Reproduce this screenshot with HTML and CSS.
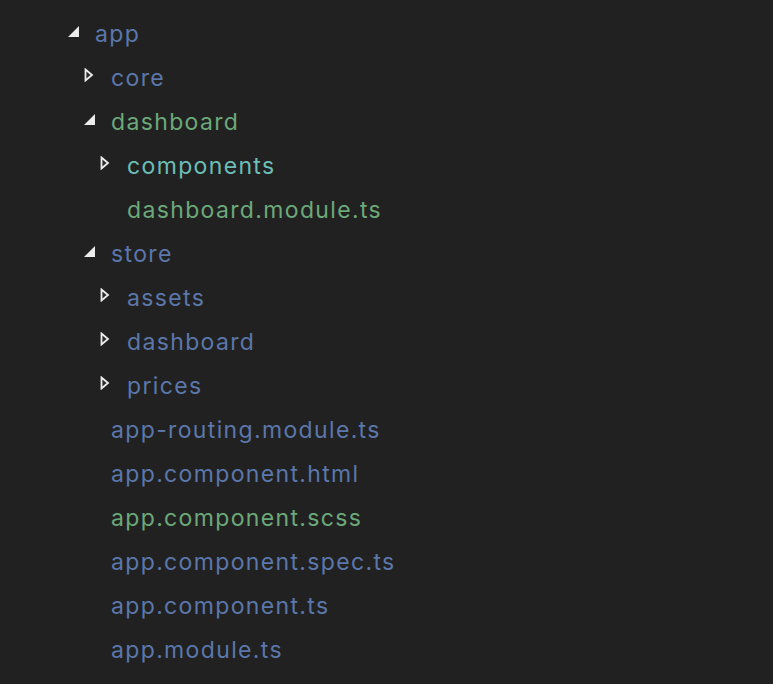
FILE: index.html
```html
<!DOCTYPE html>
<html>
<head>
<meta charset="utf-8">
<link rel="stylesheet" href="styles.css">
</head>
<body>
<ul class="tree">
  <li class="row lvl0"><span class="twistie"><svg class="open" width="11" height="11" viewBox="0 0 11 11"><polygon points="0,11 11,11 11,0" fill="#ececec"/></svg></span><span class="label blue">app</span></li>
  <li class="row lvl1"><span class="twistie"><svg class="closed" width="10" height="14" viewBox="0 0 10 14"><polygon points="1.5,1.5 8,7 1.5,12.5" fill="#2a2a2a" stroke="#ececec" stroke-width="1.8" stroke-linejoin="miter"/></svg></span><span class="label blue">core</span></li>
  <li class="row lvl1"><span class="twistie"><svg class="open" width="11" height="11" viewBox="0 0 11 11"><polygon points="0,11 11,11 11,0" fill="#ececec"/></svg></span><span class="label green">dashboard</span></li>
  <li class="row lvl2"><span class="twistie"><svg class="closed" width="10" height="14" viewBox="0 0 10 14"><polygon points="1.5,1.5 8,7 1.5,12.5" fill="#2a2a2a" stroke="#ececec" stroke-width="1.8" stroke-linejoin="miter"/></svg></span><span class="label teal">components</span></li>
  <li class="row lvl2"><span class="twistie"></span><span class="label green">dashboard.module.ts</span></li>
  <li class="row lvl1"><span class="twistie"><svg class="open" width="11" height="11" viewBox="0 0 11 11"><polygon points="0,11 11,11 11,0" fill="#ececec"/></svg></span><span class="label blue">store</span></li>
  <li class="row lvl2"><span class="twistie"><svg class="closed" width="10" height="14" viewBox="0 0 10 14"><polygon points="1.5,1.5 8,7 1.5,12.5" fill="#2a2a2a" stroke="#ececec" stroke-width="1.8" stroke-linejoin="miter"/></svg></span><span class="label blue">assets</span></li>
  <li class="row lvl2"><span class="twistie"><svg class="closed" width="10" height="14" viewBox="0 0 10 14"><polygon points="1.5,1.5 8,7 1.5,12.5" fill="#2a2a2a" stroke="#ececec" stroke-width="1.8" stroke-linejoin="miter"/></svg></span><span class="label blue">dashboard</span></li>
  <li class="row lvl2"><span class="twistie"><svg class="closed" width="10" height="14" viewBox="0 0 10 14"><polygon points="1.5,1.5 8,7 1.5,12.5" fill="#2a2a2a" stroke="#ececec" stroke-width="1.8" stroke-linejoin="miter"/></svg></span><span class="label blue">prices</span></li>
  <li class="row lvl1"><span class="twistie"></span><span class="label blue">app-routing.module.ts</span></li>
  <li class="row lvl1"><span class="twistie"></span><span class="label blue">app.component.html</span></li>
  <li class="row lvl1"><span class="twistie"></span><span class="label green">app.component.scss</span></li>
  <li class="row lvl1"><span class="twistie"></span><span class="label blue">app.component.spec.ts</span></li>
  <li class="row lvl1"><span class="twistie"></span><span class="label blue">app.component.ts</span></li>
  <li class="row lvl1"><span class="twistie"></span><span class="label blue">app.module.ts</span></li>
</ul>
</body>
</html>
```
FILE: styles.css
```css
html, body {
  margin: 0;
  padding: 0;
  background: #212121;
  height: 100%;
}
.tree {
  list-style: none;
  margin: 0;
  padding: 12px 0 0 0;
  font-family: Inter, "Noto Sans", sans-serif;
  font-size: 23px;
  letter-spacing: 1.35px;
}
.row {
  display: flex;
  align-items: center;
  height: 44px;
}
.lvl0 { padding-left: 68px; }
.lvl1 { padding-left: 84px; }
.lvl2 { padding-left: 100px; }
.twistie {
  width: 27px;
  flex: none;
  display: flex;
  align-items: center;
}
.twistie .open { margin-top: -5px; }
.twistie .closed { margin-top: -7px; }
.label { line-height: 44px; white-space: nowrap; }
.blue { color: #5b77ab; }
.green { color: #6ca97a; }
.teal { color: #6cbfb8; }
```
